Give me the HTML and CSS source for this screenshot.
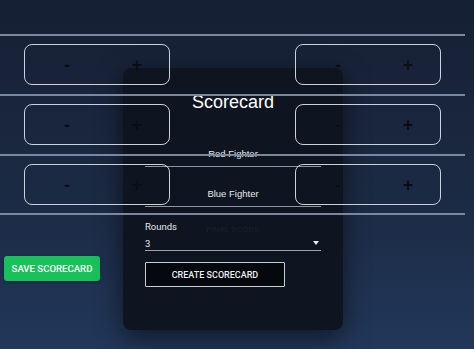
FILE: index.html
```html
<!DOCTYPE html>
<html>
<head>
<meta charset="utf-8">
<link rel="stylesheet" href="styles.css">
</head>
<body>
<div class="page">
  <div class="table">
    <div class="row">
      <div class="counter"><span class="btn">-</span><span class="btn">+</span></div>
      <div class="counter"><span class="btn">-</span><span class="btn">+</span></div>
    </div>
    <div class="row">
      <div class="counter"><span class="btn">-</span><span class="btn">+</span></div>
      <div class="counter"><span class="btn">-</span><span class="btn">+</span></div>
    </div>
    <div class="row">
      <div class="counter"><span class="btn">-</span><span class="btn">+</span></div>
      <div class="counter"><span class="btn">-</span><span class="btn">+</span></div>
    </div>
  </div>
  <button class="save">SAVE SCORECARD</button>

  <div class="modal">
    <h2 class="title">Scorecard</h2>
    <div class="field field-red">Red Fighter</div>
    <div class="field field-blue">Blue Fighter</div>
    <div class="ghost">FINAL SCORE</div>
    <div class="select">
      <div class="select-label">Rounds</div>
      <div class="select-value"><span>3</span><span class="arrow"></span></div>
    </div>
    <button class="create">CREATE SCORECARD</button>
  </div>
</div>
</body>
</html>
```
FILE: styles.css
```css
html, body {
  margin: 0;
  padding: 0;
}
body {
  width: 474px;
  height: 349px;
  overflow: hidden;
  background: linear-gradient(180deg, #161f33 0%, #1b2a43 55%, #223759 100%);
  font-family: "Liberation Sans", Arial, sans-serif;
}
.page {
  position: relative;
  height: 349px;
  padding-top: 34px;
  box-sizing: border-box;
}
.table {
  position: relative;
  z-index: 2;
  width: 465px;
  border-bottom: 2px solid #7a889d;
}
.row {
  display: flex;
  gap: 125px;
  padding: 8px 0 0 24px;
  box-sizing: content-box;
  height: 50px;
  border-top: 2px solid #7a889d;
}
.row:last-child {
  height: 49px;
}
.counter {
  width: 146px;
  height: 41px;
  box-sizing: border-box;
  border: 1.5px solid #cdd1d8;
  border-radius: 8px;
  display: flex;
  align-items: center;
  padding-left: 32px;
  gap: 50px;
}
.btn {
  width: 20px;
  text-align: center;
  font-weight: bold;
  font-size: 18px;
  color: #0b0d12;
  line-height: 20px;
}
.save {
  display: block;
  margin: 41px 0 0 4px;
  width: 96px;
  height: 25px;
  border: none;
  border-radius: 3px;
  background: #17c25a;
  color: #ffffff;
  font-family: Roboto, "Liberation Sans", sans-serif;
  font-size: 9.6px;
  font-weight: 500;
  padding: 0;
  box-shadow: 0 1px 3px rgba(0,0,0,0.3);
}
.modal {
  position: absolute;
  z-index: 1;
  left: 123px;
  top: 68px;
  width: 220px;
  height: 262px;
  box-sizing: border-box;
  padding: 24px 22px 0 22px;
  background: #0f1520;
  border-radius: 8px;
  box-shadow: 0 8px 26px rgba(0,0,0,0.55);
}
.title {
  margin: 0;
  text-align: center;
  font-weight: normal;
  font-size: 18px;
  line-height: 20px;
  color: #ffffff;
}
.field {
  text-align: center;
  font-size: 9.5px;
  line-height: 12px;
  color: #e6e8ec;
  padding-bottom: 6px;
  border-bottom: 1px solid #8c95a3;
}
.field-red {
  margin-top: 36px;
}
.field-blue {
  margin-top: 21px;
}
.ghost {
  position: absolute;
  left: 0;
  right: 0;
  top: 157px;
  text-align: center;
  font-size: 7.5px;
  color: #1b212d;
  letter-spacing: 0.3px;
}
.select {
  margin-top: 14px;
  font-family: Roboto, "Liberation Sans", sans-serif;
  border-bottom: 1.5px solid #9aa2ae;
}
.select-label {
  font-size: 9.5px;
  line-height: 12px;
  color: #e4e6ea;
}
.select-value {
  display: flex;
  justify-content: space-between;
  align-items: center;
  margin-top: 3px;
  height: 14px;
  font-size: 9.5px;
  color: #e8eaee;
  padding-right: 2px;
}
.arrow {
  width: 0;
  height: 0;
  border-left: 3.5px solid transparent;
  border-right: 3.5px solid transparent;
  border-top: 4px solid #e8eaee;
}
.create {
  display: block;
  margin-top: 11px;
  width: 140px;
  height: 25px;
  padding: 0;
  background: #05080c;
  border: 1.5px solid #c9cdd3;
  border-radius: 1px;
  color: #eceef1;
  font-family: Roboto, "Liberation Sans", sans-serif;
  font-size: 9px;
  font-weight: 500;
}
```
